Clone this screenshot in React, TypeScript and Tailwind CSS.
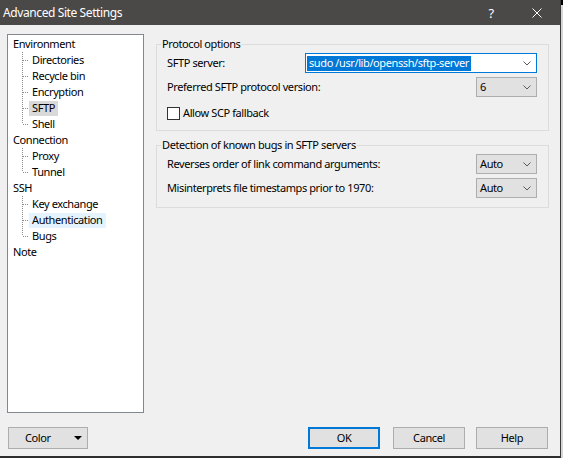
import React from 'react';

type TreeGroup = { label: string; children?: string[] };

const tree: TreeGroup[] = [
  { label: 'Environment', children: ['Directories', 'Recycle bin', 'Encryption', 'SFTP', 'Shell'] },
  { label: 'Connection', children: ['Proxy', 'Tunnel'] },
  { label: 'SSH', children: ['Key exchange', 'Authentication', 'Bugs'] },
  { label: 'Note' },
];

const Chevron = () => (
  <svg width="8" height="5" viewBox="0 0 8 5" className="shrink-0">
    <path d="M0.5 0.5 L4 4 L7.5 0.5" fill="none" stroke="#5a5a5a" strokeWidth="1" />
  </svg>
);

const Combo = ({ value }: { value: string }) => (
  <div className="flex h-[20px] w-[61px] shrink-0 items-center justify-between border border-[#adadad] bg-[#e1e1e1] pl-[3px] pr-[5px]">
    <span>{value}</span>
    <Chevron />
  </div>
);

// dotted connector drawn in front of each child row
const TreeLines = ({ last }: { last: boolean }) => (
  <svg width="16" height="16" viewBox="0 0 16 16" className="shrink-0" shapeRendering="crispEdges">
    <line x1="9.5" y1="0" x2="9.5" y2={last ? 8 : 16} stroke="#8c8c8c" strokeDasharray="1 1" />
    <line x1="10" y1="8.5" x2="16" y2="8.5" stroke="#8c8c8c" strokeDasharray="1 1" />
  </svg>
);

const Tree = () => (
  <div className="flex h-[379px] w-[137px] shrink-0 flex-col border border-[#828790] bg-white pl-[5px] pt-[1px]">
    {tree.map((g) => (
      <div key={g.label} className="flex flex-col">
        <div className="flex h-[16px] items-center">{g.label}</div>
        {g.children?.map((c, i) => (
          <div key={c} className="flex h-[16px] items-center">
            <TreeLines last={i === g.children!.length - 1} />
            <span
              className={
                c === 'SFTP'
                  ? 'flex h-[15px] items-center bg-[#d9d9d9] px-[3px]'
                  : c === 'Authentication'
                  ? 'flex h-[15px] items-center bg-[#e5f3ff] px-[3px]'
                  : 'flex h-[15px] items-center px-[3px]'
              }
            >
              {c}
            </span>
          </div>
        ))}
      </div>
    ))}
  </div>
);

const GroupBox = ({ title, children }: { title: string; children: React.ReactNode }) => (
  <div className="flex flex-col">
    <div className="flex h-[16px]">
      <div className="mt-[8px] w-[5px] border-l border-t border-[#dcdcdc]" />
      <span className="px-[1px]">{title}</span>
      <div className="mt-[8px] flex-1 border-r border-t border-[#dcdcdc]" />
    </div>
    <div className="flex flex-col border-x border-b border-[#dcdcdc] pb-[9px] pl-[10px] pr-[11px] pt-[1px]">
      {children}
    </div>
  </div>
);

const Button = ({ label, primary }: { label: string; primary?: boolean }) => (
  <div
    className={
      primary
        ? 'flex h-[22px] w-[72px] items-center justify-center border-2 border-[#0078d7] bg-[#e1e1e1]'
        : 'flex h-[22px] w-[72px] items-center justify-center border border-[#adadad] bg-[#e1e1e1]'
    }
  >
    {label}
  </div>
);

export default function App() {
  return (
    <div className="flex h-[458px] w-[563px] overflow-hidden bg-[#2e2e2e] font-['Noto_Sans',sans-serif] text-[11px] leading-[16px] tracking-[-0.4px] text-black">
      <div className="flex h-[456px] w-[561px] shrink-0 flex-col border-r border-[#3a3a3a] bg-[#f0f0f0]">
        {/* title bar */}
        <div className="flex h-[25px] shrink-0 items-center bg-[#4a4947] text-[12px] text-white">
          <span className="pl-[3px]">Advanced Site Settings</span>
          <span className="ml-auto flex w-[46px] justify-center text-[13px]">?</span>
          <span className="flex w-[46px] justify-center">
            <svg width="10" height="10" viewBox="0 0 10 10">
              <path d="M0.5 0.5 L9.5 9.5 M9.5 0.5 L0.5 9.5" stroke="#ffffff" strokeWidth="1" />
            </svg>
          </span>
        </div>

        <div className="flex flex-1 flex-col pl-[7px] pt-[9px]">
          <div className="flex">
            <Tree />
            <div className="ml-[12px] mt-[2px] flex w-[393px] flex-col gap-[6px]">
              <GroupBox title="Protocol options">
                <div className="flex h-[20px] items-center justify-between">
                  <span>SFTP server:</span>
                  <div className="flex h-[20px] w-[232px] items-center justify-between border border-[#0078d7] bg-white pl-[1px] pr-[5px]">
                    <span className="flex h-[15px] items-center bg-[#0078d7] px-[2px] text-white">
                      sudo /usr/lib/openssh/sftp-server
                    </span>
                    <Chevron />
                  </div>
                </div>
                <div className="mt-[4px] flex h-[20px] items-center justify-between">
                  <span>Preferred SFTP protocol version:</span>
                  <Combo value="6" />
                </div>
                <div className="mt-[8px] flex h-[16px] items-center gap-[3px]">
                  <div className="h-[13px] w-[13px] border border-[#333333] bg-white" />
                  <span>Allow SCP fallback</span>
                </div>
              </GroupBox>
              <GroupBox title="Detection of known bugs in SFTP servers">
                <div className="flex h-[20px] items-center justify-between">
                  <span>Reverses order of link command arguments:</span>
                  <Combo value="Auto" />
                </div>
                <div className="mt-[4px] flex h-[20px] items-center justify-between">
                  <span>Misinterprets file timestamps prior to 1970:</span>
                  <Combo value="Auto" />
                </div>
              </GroupBox>
            </div>
          </div>

          <div className="mt-[14px] flex items-center justify-between pr-[12px]">
            <div className="ml-[1px] flex h-[22px] w-[80px] items-center border border-[#adadad] bg-[#e1e1e1] pl-[16px] pr-[5px]">
              <span>Color</span>
              <svg width="8" height="4" viewBox="0 0 8 4" className="ml-auto">
                <path d="M0 0 L8 0 L4 4 Z" fill="#000000" />
              </svg>
            </div>
            <div className="flex items-center">
              <Button label="OK" primary />
              <div className="ml-[13px]">
                <Button label="Cancel" />
              </div>
              <div className="ml-[11px]">
                <Button label="Help" />
              </div>
            </div>
          </div>
        </div>
      </div>
      <div className="flex w-[2px] flex-col">
        <div className="h-[5px] bg-black" />
        <div className="flex-1 bg-[#d6d6d6]" />
      </div>
    </div>
  );
}
